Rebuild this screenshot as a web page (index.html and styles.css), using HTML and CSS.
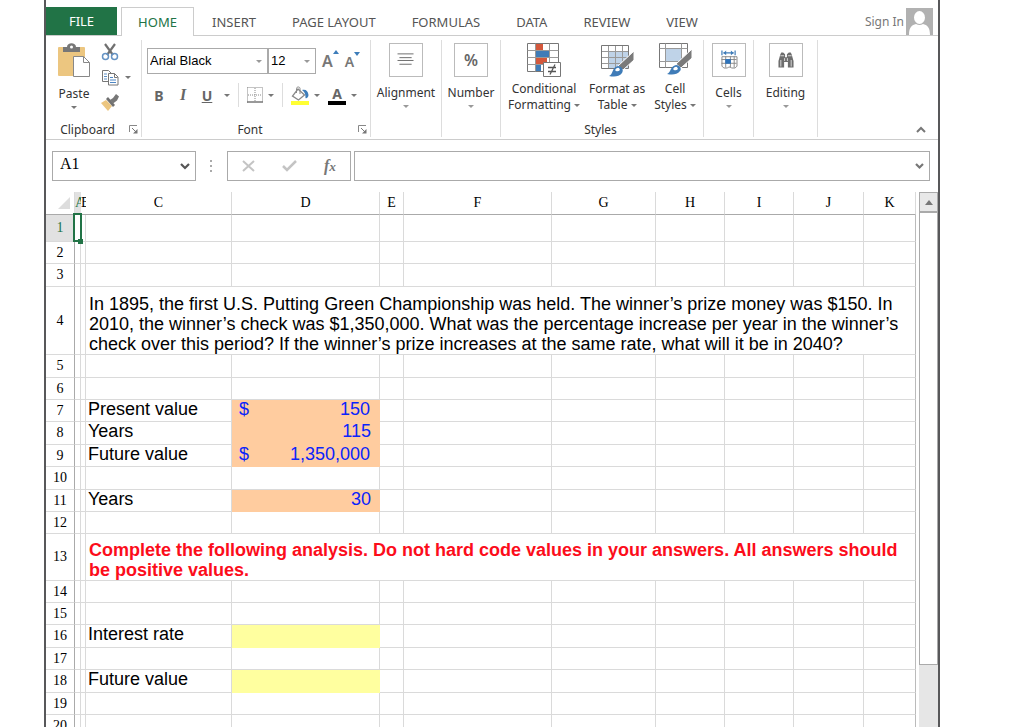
FILE: index.html
```html
<!DOCTYPE html>
<html lang="en">
<head>
  <meta charset="UTF-8">
  <title>Workbook</title>
  <meta name="viewport" content="width=device-width, initial-scale=1.0">
  <link rel="stylesheet" href="styles.css">
</head>
<body>
  <div class="workbook">
    <nav class="tabs">
      <button class="tab tab-file">FILE</button>
      <button class="tab tab-active">HOME</button>
      <button class="tab">INSERT</button>
      <button class="tab">PAGE LAYOUT</button>
      <button class="tab">FORMULAS</button>
      <button class="tab">DATA</button>
      <button class="tab">REVIEW</button>
      <button class="tab">VIEW</button>
      <a class="sign-in" href="#">Sign In
        <svg width="27" height="27" viewBox="0 0 27 27"><rect width="27" height="27" fill="#b1b1b1"/><ellipse cx="13.500" cy="9.500" rx="5.500" ry="6.500" fill="#fff"/><path d="M3 27c0-8 3-10 7-11q3.500 2 7 0c4 1 7 3 7 11z" fill="#fff"/></svg>
      </a>
    </nav>

    <div class="ribbon">
      <section class="group group-clipboard">
        <div class="group-body">
          <button class="big-btn">
            <svg width="34" height="35" viewBox="0 0 34 35"><rect x="1" y="4" width="27" height="29" rx="1" fill="#ecc680"/><path d="M6 9V4h4c0-5 9-5 9 0h4v5z" fill="#777"/><circle cx="14.500" cy="4" r="1.500" fill="#fff"/><path d="M16.500 13.500h10l6 6v14h-16z" fill="#fff" stroke="#888"/><path d="M26.500 13.500v6h6" fill="none" stroke="#888"/></svg>
            <span>Paste</span>
            <i class="caret"></i>
          </button>
          <div class="clip-tools">
            <button class="icon-btn" aria-label="Cut"><svg width="18" height="18" viewBox="0 0 18 18"><path d="M4 1l8 11M14 1L6 12" stroke="#707070" stroke-width="2.200" fill="none"/><circle cx="4.500" cy="13.500" r="3" fill="none" stroke="#6593c4" stroke-width="1.500"/><circle cx="13.500" cy="13.500" r="3" fill="none" stroke="#6593c4" stroke-width="1.500"/></svg></button>
            <button class="icon-btn copy-btn" aria-label="Copy"><svg width="18" height="17" viewBox="0 0 18 17"><path d="M1.500 1.500h6l3 3v8h-9z" fill="#fff" stroke="#777"/><path d="M3 5h3M3 7.500h3M3 10h3" stroke="#5c8fc5"/><path d="M7.500 4.500h6l3.500 3.500v8h-9.500z" fill="#fff" stroke="#777"/><path d="M13.500 4.500v4h3" fill="none" stroke="#777"/><path d="M9 8.500h3M9 11h6M9 13.500h6" stroke="#4d86c3"/></svg><i class="caret"></i></button>
            <button class="icon-btn" aria-label="Format Painter"><svg width="18" height="17" viewBox="0 0 18 17"><path d="M0 9l5-3 6 6-4 5z" fill="#ecc680"/><path d="M5 5l2-2 7 8-2 2z" fill="#707070"/><path d="M9 6l3-2 3-4 3 2.500-2 4-4 3z" fill="#777"/></svg></button>
          </div>
        </div>
        <footer class="group-label"><span>Clipboard</span><button class="launcher" aria-label="Clipboard options"><svg width="9" height="9" viewBox="0 0 9 9"><path d="M.5 7V.5H8" fill="none" stroke="#888"/><path d="M3 3l4 4" stroke="#777"/><path d="M8.500 4v4.500H4z" fill="#777"/></svg></button></footer>
      </section>

      <section class="group group-font">
        <div class="group-body font-body">
          <div class="font-row">
            <label class="combo combo-name"><select aria-label="Font"><option>Arial Black</option></select><i class="caret caret-light"></i></label>
            <label class="combo combo-size"><select aria-label="Font size"><option>12</option></select><i class="caret caret-light"></i></label>
            <button class="size-btn grow" aria-label="Increase font size"><span>A</span><svg width="6" height="4" viewBox="0 0 6 4"><path d="M0 4l3-4 3 4z" fill="#3d7dba"/></svg></button>
            <button class="size-btn shrink" aria-label="Decrease font size"><span>A</span><svg width="6" height="4" viewBox="0 0 6 4"><path d="M0 0l3 4 3-4z" fill="#3d7dba"/></svg></button>
          </div>
          <div class="format-row">
            <button class="letter">B</button>
            <button class="letter serif"><em>I</em></button>
            <button class="letter"><u>U</u></button>
            <button class="drop" aria-label="Underline options"><i class="caret"></i></button>
            <span class="rule"></span>
            <button class="icon-btn" aria-label="Borders"><svg width="16" height="16" viewBox="0 0 16 16"><path d="M.5.5h15v15M.5.5v15M8 1v14M1 8h14" fill="none" stroke="#888" stroke-dasharray="1 1"/><path d="M0 15h16" stroke="#777" stroke-width="1.500"/></svg></button>
            <button class="drop" aria-label="Border options"><i class="caret"></i></button>
            <span class="rule"></span>
            <button class="icon-btn" aria-label="Fill colour"><svg width="18" height="19" viewBox="0 0 18 19"><path d="M7 3l6.500 6-6 5L1.500 10z" fill="#fff" stroke="#888" stroke-width="1.300"/><path d="M5.500 7V2.500c0-2 3.500-2 3.500 0V8" fill="none" stroke="#888"/><path d="M11 4c4-1 6 1 6.500 5 0 2-2 4-3 3 0-3 0-5-3.500-8z" fill="#3d7dba"/><path d="M0 15h18v4H0z" fill="#ff3"/></svg></button>
            <button class="drop" aria-label="Fill options"><i class="caret"></i></button>
            <button class="letter font-color" aria-label="Font colour">A</button>
            <button class="drop" aria-label="Font colour options"><i class="caret"></i></button>
          </div>
        </div>
        <footer class="group-label"><span>Font</span><button class="launcher" aria-label="Font options"><svg width="9" height="9" viewBox="0 0 9 9"><path d="M.5 7V.5H8" fill="none" stroke="#888"/><path d="M3 3l4 4" stroke="#777"/><path d="M8.500 4v4.500H4z" fill="#777"/></svg></button></footer>
      </section>

      <section class="group group-alignment">
        <button class="big-btn">
          <svg class="boxed" width="34" height="34" viewBox="0 0 34 34"><path d="M8 10.500h17M10 14.500h13M8 17.500h17M10 21.500h13" stroke="#666"/></svg>
          <span>Alignment</span>
          <i class="caret caret-light"></i>
        </button>
      </section>

      <section class="group group-number">
        <button class="big-btn">
          <span class="boxed percent">%</span>
          <span>Number</span>
          <i class="caret caret-light"></i>
        </button>
      </section>

      <section class="group group-styles">
        <div class="group-body">
          <button class="big-btn two-line">
            <svg width="34" height="34" viewBox="0 0 34 34"><path d="M.5.500h31v28H.5z" fill="#fff" stroke="#777"/><path d="M8.500.5v28M22.500.5v28M.5 7.500h31M.5 14.500h31M.5 21.500h31" stroke="#999" fill="none"/><path d="M9 1h7v6H9zM9 15h11v6H9z" fill="#d4583c"/><path d="M9 8h13v6H9zM9 22h5v6H9z" fill="#3f7cb8"/><path d="M16.500 19.500h17v14h-17z" fill="#fff" stroke="#777"/><path d="M21 24.500h8M21 28.500h8M28 21.500l-5 10" stroke="#555" stroke-width="1.300"/></svg>
            <span>Conditional<br>Formatting <i class="caret"></i></span>
          </button>
          <button class="big-btn two-line">
            <svg width="34" height="34" viewBox="0 0 34 34"><path d="M1.500 2.500h27v23h-27z" fill="#fff" stroke="#777"/><path d="M8 9h20v16H8z" fill="#bfd3e8"/><path d="M8.500 3v22M15.500 3v22M22.500 3v22M2 8.500h26M2 14.500h26M2 20.500h26" stroke="#999"/><path d="M34 8v9L23 27l-5-4z" fill="#7a7a7a" stroke="#fff"/><path d="M9 33c4-1 3-9 9-10 4 0 6 4 4 7-3 4-8 4-13 3z" fill="#3f7cb8"/><path d="M15 27q2-3 4-2l1 2q-2 2-4 1z" fill="#fff"/></svg>
            <span>Format as<br>Table <i class="caret"></i></span>
          </button>
          <button class="big-btn two-line">
            <svg width="34" height="34" viewBox="0 0 34 34"><path d="M1.500.5h28v24h-28z" fill="#fff" stroke="#777"/><path d="M7.500.5v24M23.500.5v24M1.500 5.500h28M1.500 18.500h28" stroke="#999"/><path d="M8 6h15v12H8z" fill="#bfd3e8"/><path d="M34 6v9L23 25l-5-4z" fill="#7a7a7a" stroke="#fff"/><path d="M9 31c4-1 3-8 9-9 4 0 6 4 4 6-3 4-8 4-13 3z" fill="#3f7cb8"/><path d="M15 26q2-3 4-2l1 2q-2 2-4 1z" fill="#fff"/></svg>
            <span>Cell<br>Styles <i class="caret"></i></span>
          </button>
        </div>
        <footer class="group-label"><span>Styles</span></footer>
      </section>

      <section class="group group-cells">
        <button class="big-btn">
          <svg class="boxed" width="34" height="34" viewBox="0 0 34 34"><path d="M9.500 7v5M23.500 7v5M11 9.500h11" stroke="#3f7cb8" stroke-width="1.300"/><path d="M11 9.500l3-2.500v5zM22 9.500L19 7v5z" fill="#3f7cb8"/><path d="M9.500 13.500h16v10l-2 2h-4l-1-1h-2l-1 1h-4l-2-2zM13.500 13v12M18.500 13v12M22.500 13v12M9 16.500h16M9 20.500h16" fill="none" stroke="#888"/><path d="M13 16h6v5h-6z" fill="#2f74bb"/></svg>
          <span>Cells</span>
          <i class="caret caret-light"></i>
        </button>
      </section>

      <section class="group group-editing">
        <button class="big-btn">
          <svg class="boxed" width="34" height="34" viewBox="0 0 34 34"><path d="M11 11l1-2h2l2 2v3h2v-3l2-2h2l1 2 2 7v7h-6v-6h-4v6H9v-7z" fill="#6d6d6d"/><path d="M11 12.500h4M19 12.500h4M11.500 17v7M22.500 17v7M15.500 15v3M18.500 15v3" stroke="#ddd"/></svg>
          <span>Editing</span>
          <i class="caret caret-light"></i>
        </button>
      </section>

      <button class="collapse" aria-label="Collapse the ribbon"><svg width="10" height="7" viewBox="0 0 10 7"><path d="M1 6l4-4 4 4" fill="none" stroke="#777" stroke-width="2"/></svg></button>
    </div>

    <div class="formula-bar">
      <div class="name-box">
        <input type="text" value="A1" aria-label="Name box">
        <button class="icon-btn" aria-label="Names"><svg width="10" height="8" viewBox="0 0 10 8"><path d="M1 2l4 4 4-4" fill="none" stroke="#555" stroke-width="2.200"/></svg></button>
      </div>
      <svg class="dots" width="3" height="12" viewBox="0 0 3 12"><path d="M0 0h2v2H0zM0 5h2v2H0zM0 10h2v2H0z" fill="#aaa"/></svg>
      <div class="fx-box">
        <button class="icon-btn" aria-label="Cancel"><svg width="13" height="12" viewBox="0 0 13 12"><path d="M1 1l11 10M12 1L1 11" stroke="#c4c4c4" stroke-width="2"/></svg></button>
        <button class="icon-btn" aria-label="Enter"><svg width="15" height="12" viewBox="0 0 15 12"><path d="M1 6l4 4 9-9" fill="none" stroke="#c4c4c4" stroke-width="2.500"/></svg></button>
        <button class="fx">f<small>x</small></button>
      </div>
      <div class="formula">
        <input type="text" aria-label="Formula">
        <button class="icon-btn" aria-label="Expand"><svg width="9" height="7" viewBox="0 0 9 7"><path d="M1 1l3.500 3.500L8 1" fill="none" stroke="#777" stroke-width="2.200"/></svg></button>
      </div>
    </div>

    <div class="sheet">
      <table class="grid">
        <colgroup>
          <col class="col-head"><col class="col-a"><col class="col-b"><col class="col-c"><col class="col-d"><col class="col-e">
          <col class="col-f"><col class="col-g"><col class="col-h"><col class="col-i"><col class="col-j"><col>
        </colgroup>
        <thead>
          <tr>
            <th class="corner"><svg width="12" height="12" viewBox="0 0 12 12"><path d="M12 0v12H0z" fill="#ddd"/></svg></th>
            <th class="narrow selected">A</th><th class="narrow">B</th><th>C</th><th>D</th><th>E</th><th>F</th><th>G</th><th>H</th><th>I</th><th>J</th><th>K</th>
          </tr>
        </thead>
        <tbody>
          <tr class="row-first"><th class="selected">1</th><td class="cursor"></td><td></td><td></td><td></td><td></td><td></td><td></td><td></td><td></td><td></td><td></td></tr>
          <tr><th>2</th><td></td><td></td><td></td><td></td><td></td><td></td><td></td><td></td><td></td><td></td><td></td></tr>
          <tr class="plus"><th>3</th><td></td><td></td><td></td><td></td><td></td><td></td><td></td><td></td><td></td><td></td><td></td></tr>
          <tr class="row-question"><th>4</th><td></td><td></td><td colspan="9" class="text">In 1895, the first U.S. Putting Green Championship was held. The winner’s prize money was $150. In 2010, the winner’s check was $1,350,000. What was the percentage increase per year in the winner’s check over this period? If the winner’s prize increases at the same rate, what will it be in 2040?</td></tr>
          <tr class="plus"><th>5</th><td></td><td></td><td></td><td></td><td></td><td></td><td></td><td></td><td></td><td></td><td></td></tr>
          <tr><th>6</th><td></td><td></td><td></td><td></td><td></td><td></td><td></td><td></td><td></td><td></td><td></td></tr>
          <tr><th>7</th><td></td><td></td><td>Present value</td><td class="given"><div class="money"><span>$</span><span>150</span></div></td><td></td><td></td><td></td><td></td><td></td><td></td><td></td></tr>
          <tr class="plus"><th>8</th><td></td><td></td><td>Years</td><td class="given number">115</td><td></td><td></td><td></td><td></td><td></td><td></td><td></td></tr>
          <tr><th>9</th><td></td><td></td><td>Future value</td><td class="given"><div class="money"><span>$</span><span>1,350,000</span></div></td><td></td><td></td><td></td><td></td><td></td><td></td><td></td></tr>
          <tr class="plus"><th>10</th><td></td><td></td><td></td><td></td><td></td><td></td><td></td><td></td><td></td><td></td><td></td></tr>
          <tr><th>11</th><td></td><td></td><td>Years</td><td class="given number">30</td><td></td><td></td><td></td><td></td><td></td><td></td><td></td></tr>
          <tr><th>12</th><td></td><td></td><td></td><td></td><td></td><td></td><td></td><td></td><td></td><td></td><td></td></tr>
          <tr class="row-task"><th>13</th><td></td><td></td><td colspan="9" class="text task">Complete the following analysis. Do not hard code values in your answers. All answers should be positive values.</td></tr>
          <tr><th>14</th><td></td><td></td><td></td><td></td><td></td><td></td><td></td><td></td><td></td><td></td><td></td></tr>
          <tr><th>15</th><td></td><td></td><td></td><td></td><td></td><td></td><td></td><td></td><td></td><td></td><td></td></tr>
          <tr class="plus"><th>16</th><td></td><td></td><td>Interest rate</td><td class="answer"></td><td></td><td></td><td></td><td></td><td></td><td></td><td></td></tr>
          <tr><th>17</th><td></td><td></td><td></td><td></td><td></td><td></td><td></td><td></td><td></td><td></td><td></td></tr>
          <tr class="plus"><th>18</th><td></td><td></td><td>Future value</td><td class="answer"></td><td></td><td></td><td></td><td></td><td></td><td></td><td></td></tr>
          <tr><th>19</th><td></td><td></td><td></td><td></td><td></td><td></td><td></td><td></td><td></td><td></td><td></td></tr>
          <tr><th>20</th><td></td><td></td><td></td><td></td><td></td><td></td><td></td><td></td><td></td><td></td><td></td></tr>
        </tbody>
      </table>
      <div class="scrollbar">
        <button class="scroll-up" aria-label="Scroll up"><svg width="8" height="5" viewBox="0 0 8 5"><path d="M0 5l4-5 4 5z" fill="#777"/></svg></button>
        <div class="track"><div class="thumb"></div></div>
      </div>
    </div>
  </div>
</body>
</html>
```
FILE: styles.css
```css
* {
  box-sizing: border-box;
}

body {
  margin: 0;
  background: #fff;
  font-family: "Noto Sans", "Open Sans", sans-serif;
  font-size: 12px;
  color: #333;
}

button,
input,
select {
  margin: 0;
  padding: 0;
  border: none;
  background: none;
  font: inherit;
  color: inherit;
}

button {
  cursor: pointer;
}

svg {
  display: block;
}

.workbook {
  display: flex;
  flex-direction: column;
  height: 100vh;
  margin: 0 84px 0 44px;
  border: 2px solid #58585a;
  border-top: none;
  border-bottom: none;
  overflow: hidden;
}

/* tabs */
.tabs {
  display: flex;
  flex: none;
  height: 36px;
  padding-top: 7px;
  border-bottom: 1px solid #ccc;
}

.tab {
  height: 29px;
  padding: 0 18px;
  font-size: 13px;
  color: #555;
}

.tab-file {
  width: 71px;
  height: 28px;
  margin-right: 4px;
  background: #217346;
  color: #fff;
}

.tab-active {
  width: 73px;
  padding: 0;
  border: 1px solid #ccc;
  border-bottom: none;
  background: #fff;
  color: #217346;
}

.sign-in {
  display: flex;
  align-items: center;
  gap: 2px;
  height: 28px;
  margin-left: auto;
  padding-right: 5px;
  color: #777;
  text-decoration: none;
}

/* ribbon */
.ribbon {
  display: flex;
  flex: none;
  height: 104px;
  padding: 4px 0 2px;
  border-bottom: 1px solid #ccc;
}

.group {
  display: flex;
  flex-direction: column;
  flex: none;
  border-right: 1px solid #ddd;
}

.group-clipboard { width: 96px; }
.group-font { width: 229px; }
.group-alignment { width: 71px; }
.group-number { width: 59px; }
.group-styles { width: 203px; }
.group-cells { width: 50px; }
.group-editing { width: 64px; }

.group-body {
  display: flex;
  flex: 1;
}

.group-clipboard .group-body {
  gap: 10px;
  padding-left: 11px;
}

.group-styles .group-body {
  justify-content: space-between;
  padding: 0 7px;
}

.group-label {
  display: flex;
  align-items: center;
  height: 16px;
  padding-right: 3px;
}

.group-label span {
  flex: 1;
  text-align: center;
}

.big-btn {
  display: flex;
  flex-direction: column;
  align-items: center;
  padding-top: 3px;
  line-height: 16px;
}

.big-btn svg,
.big-btn .boxed {
  margin-bottom: 8px;
}

.big-btn.two-line svg {
  margin-bottom: 4px;
}

.big-btn > .caret {
  margin-top: 4px;
}

.boxed {
  width: 34px;
  height: 34px;
  border: 1px solid #bbb;
}

.percent {
  font-size: 16px;
  font-weight: 600;
  line-height: 32px;
  text-align: center;
  color: #666;
}

.caret {
  display: inline-block;
  flex: none;
  border: 3px solid transparent;
  border-top-color: #777;
  border-bottom: none;
  vertical-align: middle;
}

.caret-light {
  border-top-color: #999;
}

.icon-btn {
  display: flex;
  align-items: center;
}

.clip-tools {
  display: flex;
  flex-direction: column;
  gap: 8px;
  padding-top: 3px;
}

.copy-btn {
  gap: 6px;
}

.font-body {
  flex-direction: column;
  gap: 8px;
  padding: 8px 0 0 5px;
}

.font-row,
.format-row {
  display: flex;
  align-items: center;
  height: 26px;
}

.combo {
  position: relative;
  height: 26px;
  border: 1px solid #aaa;
  font-family: "Liberation Sans", Arial, sans-serif;
  font-size: 13px;
  color: #000;
}

.combo select {
  display: block;
  width: 100%;
  height: 22px;
  padding-left: 2px;
  appearance: none;
}

.combo .caret {
  position: absolute;
  top: 11px;
  right: 5px;
  pointer-events: none;
}

.combo-name { width: 121px; }
.combo-size { width: 48px; }

.size-btn {
  display: flex;
  align-items: flex-start;
  margin-left: 6px;
  font-weight: 600;
  color: #777;
}

.grow { font-size: 16px; }
.shrink { font-size: 14px; }

.letter {
  width: 24px;
  font-size: 14px;
  font-weight: bold;
  color: #666;
}

.serif {
  font-family: "Liberation Serif", serif;
  font-size: 16px;
}

.drop {
  width: 12px;
  margin: 0 5px 0 2px;
  line-height: 10px;
}

.rule {
  width: 1px;
  height: 24px;
  margin-right: 8px;
  background: #ddd;
}

.font-color {
  width: 18px;
  height: 19px;
  border-bottom: 4px solid #000;
  line-height: 15px;
}

.collapse {
  align-self: flex-end;
  margin: 0 12px 4px auto;
}

/* formula bar */
.formula-bar {
  display: flex;
  align-items: center;
  flex: none;
  padding: 11px 8px 11px 6px;
}

.name-box,
.fx-box,
.formula {
  display: flex;
  align-items: center;
  height: 30px;
  border: 1px solid #aaa;
}

.name-box {
  width: 144px;
  padding: 0 5px 0 7px;
}

.name-box input,
.formula input {
  flex: 1;
  min-width: 0;
  height: 28px;
  padding-bottom: 4px;
  font-family: "Liberation Serif", serif;
  font-size: 16px;
  color: #000;
}

.dots {
  margin: 0 14px;
}

.fx-box {
  justify-content: space-between;
  width: 124px;
  margin-right: 3px;
  padding: 0 14px;
}

.fx {
  font-family: "Liberation Serif", serif;
  font-size: 16px;
  font-style: italic;
  font-weight: bold;
  color: #777;
}

.formula {
  flex: 1;
  padding: 0 5px;
}

/* sheet */
.sheet {
  display: flex;
  align-items: flex-start;
  flex: 1;
  min-height: 0;
  gap: 3px;
}

.grid {
  flex: 1;
  width: 100%;
  table-layout: fixed;
  border-collapse: separate;
  border-spacing: 0;
  font-family: "Liberation Sans", Arial, sans-serif;
  font-size: 18px;
  line-height: 20px;
  color: #000;
}

.col-head { width: 29px; }
.col-a { width: 6px; }
.col-b { width: 5px; }
.col-c { width: 146px; }
.col-d { width: 148px; }
.col-e { width: 24px; }
.col-f { width: 148px; }
.col-g { width: 104px; }
.col-h { width: 69px; }
.col-i { width: 69px; }
.col-j { width: 70px; }

.grid th,
.grid td {
  height: 22px;
  padding: 0;
  border-right: 1px solid #dadada;
  border-bottom: 1px solid #dadada;
}

.grid th {
  font-family: "Liberation Serif", serif;
  font-size: 14px;
  font-weight: normal;
}

.grid thead th {
  height: 23px;
  border-bottom-color: #aaa;
  overflow: hidden;
}

.grid tbody th {
  border-right-color: #aaa;
}

.grid .corner {
  padding-left: 12px;
}

.grid .narrow {
  border-right: none;
  text-align: left;
}

.grid .selected {
  background: #e1e1e1;
  color: #217346;
}

.grid td {
  padding-left: 2px;
  line-height: 18px;
  vertical-align: top;
  white-space: nowrap;
}

.grid td:empty {
  padding: 0;
}

.grid td:last-child {
  border-right-color: #bbb;
}

.grid .plus td { height: 23px; }
.grid .row-first td { height: 27px; }
.grid .row-question td { height: 68px; }
.grid .row-task td { height: 47px; }

.grid .text {
  padding: 0 16px 0 3px;
  line-height: 20px;
  vertical-align: bottom;
  white-space: normal;
}

.grid .task {
  font-weight: bold;
  color: #fc0d1b;
}

.grid .given {
  border-color: #ffcc9f;
  background: #ffcc9f;
  color: #0b24fb;
}

.grid .number {
  padding-right: 8px;
  text-align: right;
}

.grid .answer {
  border-color: #ffff9f;
  background: #ffff9f;
}

.money {
  display: flex;
  justify-content: space-between;
  padding: 0 9px 0 5px;
}

/* outline and fill handle of the active cell */
.cursor {
  position: relative;
}

.cursor::before {
  content: "";
  position: absolute;
  inset: -2px -2px -1px -2px;
  border: 2px solid #217346;
}

.cursor::after {
  content: "";
  position: absolute;
  right: -3px;
  bottom: -3px;
  width: 5px;
  height: 5px;
  background: #217346;
}

.scrollbar {
  display: flex;
  flex-direction: column;
  align-self: stretch;
  width: 19px;
}

.scroll-up {
  display: flex;
  align-items: center;
  justify-content: center;
  height: 20px;
  border: 1px solid #aaa;
  background: #e8e8e8;
}

.track {
  flex: 1;
  background: #e6e6e6;
}

.thumb {
  height: 88%;
  border: 1px solid #aaa;
  background: #fff;
}
```
